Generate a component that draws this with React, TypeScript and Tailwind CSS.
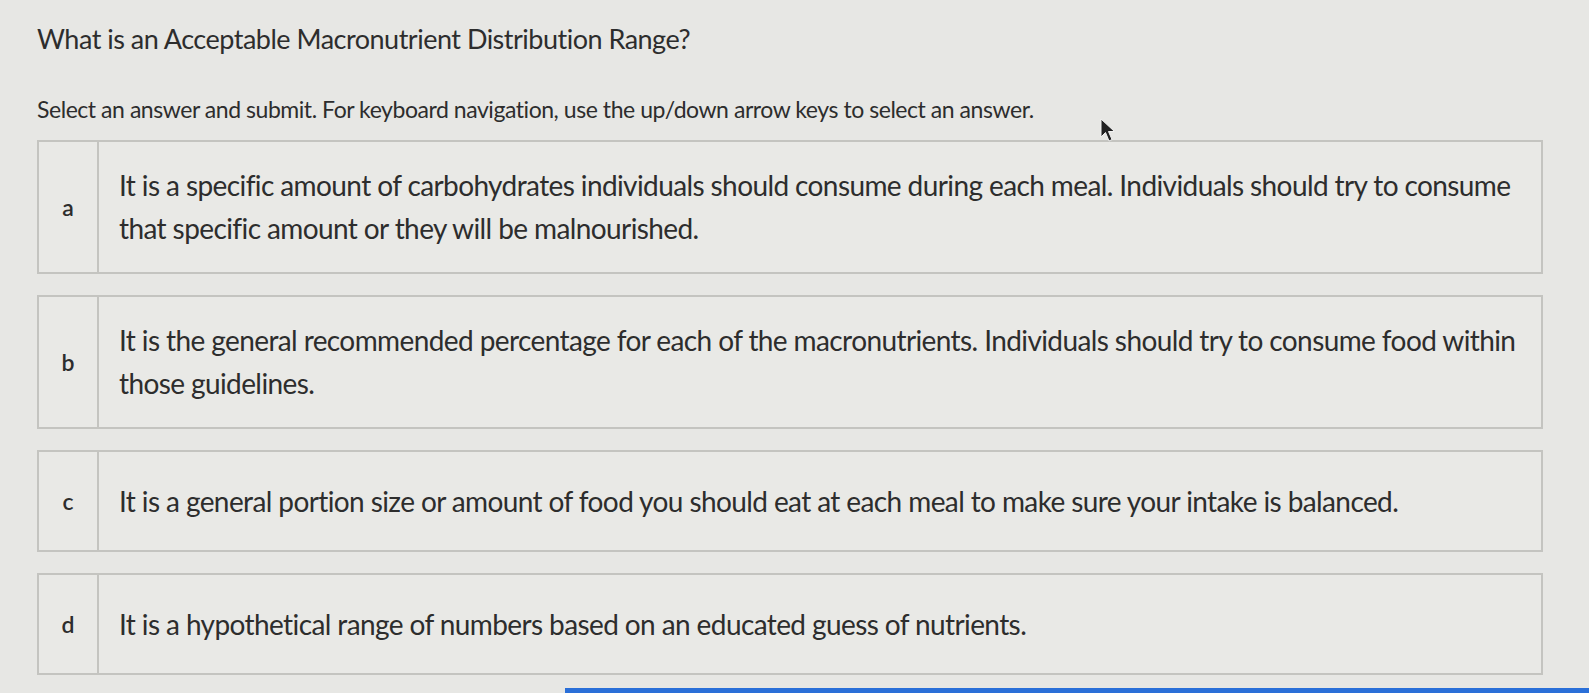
const options = [
  {
    letter: "a",
    text: "It is a specific amount of carbohydrates individuals should consume during each meal. Individuals should try to consume that specific amount or they will be malnourished.",
  },
  {
    letter: "b",
    text: "It is the general recommended percentage for each of the macronutrients. Individuals should try to consume food within those guidelines.",
  },
  {
    letter: "c",
    text: "It is a general portion size or amount of food you should eat at each meal to make sure your intake is balanced.",
  },
  {
    letter: "d",
    text: "It is a hypothetical range of numbers based on an educated guess of nutrients.",
  },
];

function Cursor() {
  return (
    <svg width="16" height="26" viewBox="0 0 16 26" className="absolute left-[1100px] top-[118px]">
      <path d="M1 1 L1 19 L5.5 14.5 L9 23 L12 21.5 L8.5 13.5 L14.5 13.5 Z" fill="#222" stroke="#f2f2f2" strokeWidth="1" />
    </svg>
  );
}

export default function App() {
  return (
    <div className="relative h-[693px] w-[1589px] overflow-hidden bg-[#e7e7e4] font-['Lato','Noto_Sans',sans-serif] text-[#2d2d2d]">
      <div className="pl-[37px] pr-[46px] pt-[22px]">
        <h1 className="text-[27px] leading-[34px] tracking-[-0.5px]">
          What is an Acceptable Macronutrient Distribution Range?
        </h1>
        <p className="mt-[38px] text-[23px] leading-[30px] tracking-[-0.45px]">
          Select an answer and submit. For keyboard navigation, use the up/down arrow keys to select an answer.
        </p>
        <div className="mt-[16px] flex flex-col gap-[21px]">
          {options.map((o) => (
            <div key={o.letter} className="flex border-2 border-[#c4c4c0] bg-[#e9e9e6]">
              <div className="flex w-[60px] shrink-0 items-center justify-center border-r-2 border-[#c4c4c0] text-[23px] font-semibold">
                {o.letter}
              </div>
              <div className="flex min-h-[98px] flex-1 items-center py-[22px] pl-[20px] pr-[24px] text-[28px] leading-[43px] tracking-[-0.6px]">
                {o.text}
              </div>
            </div>
          ))}
        </div>
      </div>
      <Cursor />
      <div className="absolute bottom-0 left-[565px] right-0 h-[5px] bg-[#2a6fd8]" />
    </div>
  );
}
